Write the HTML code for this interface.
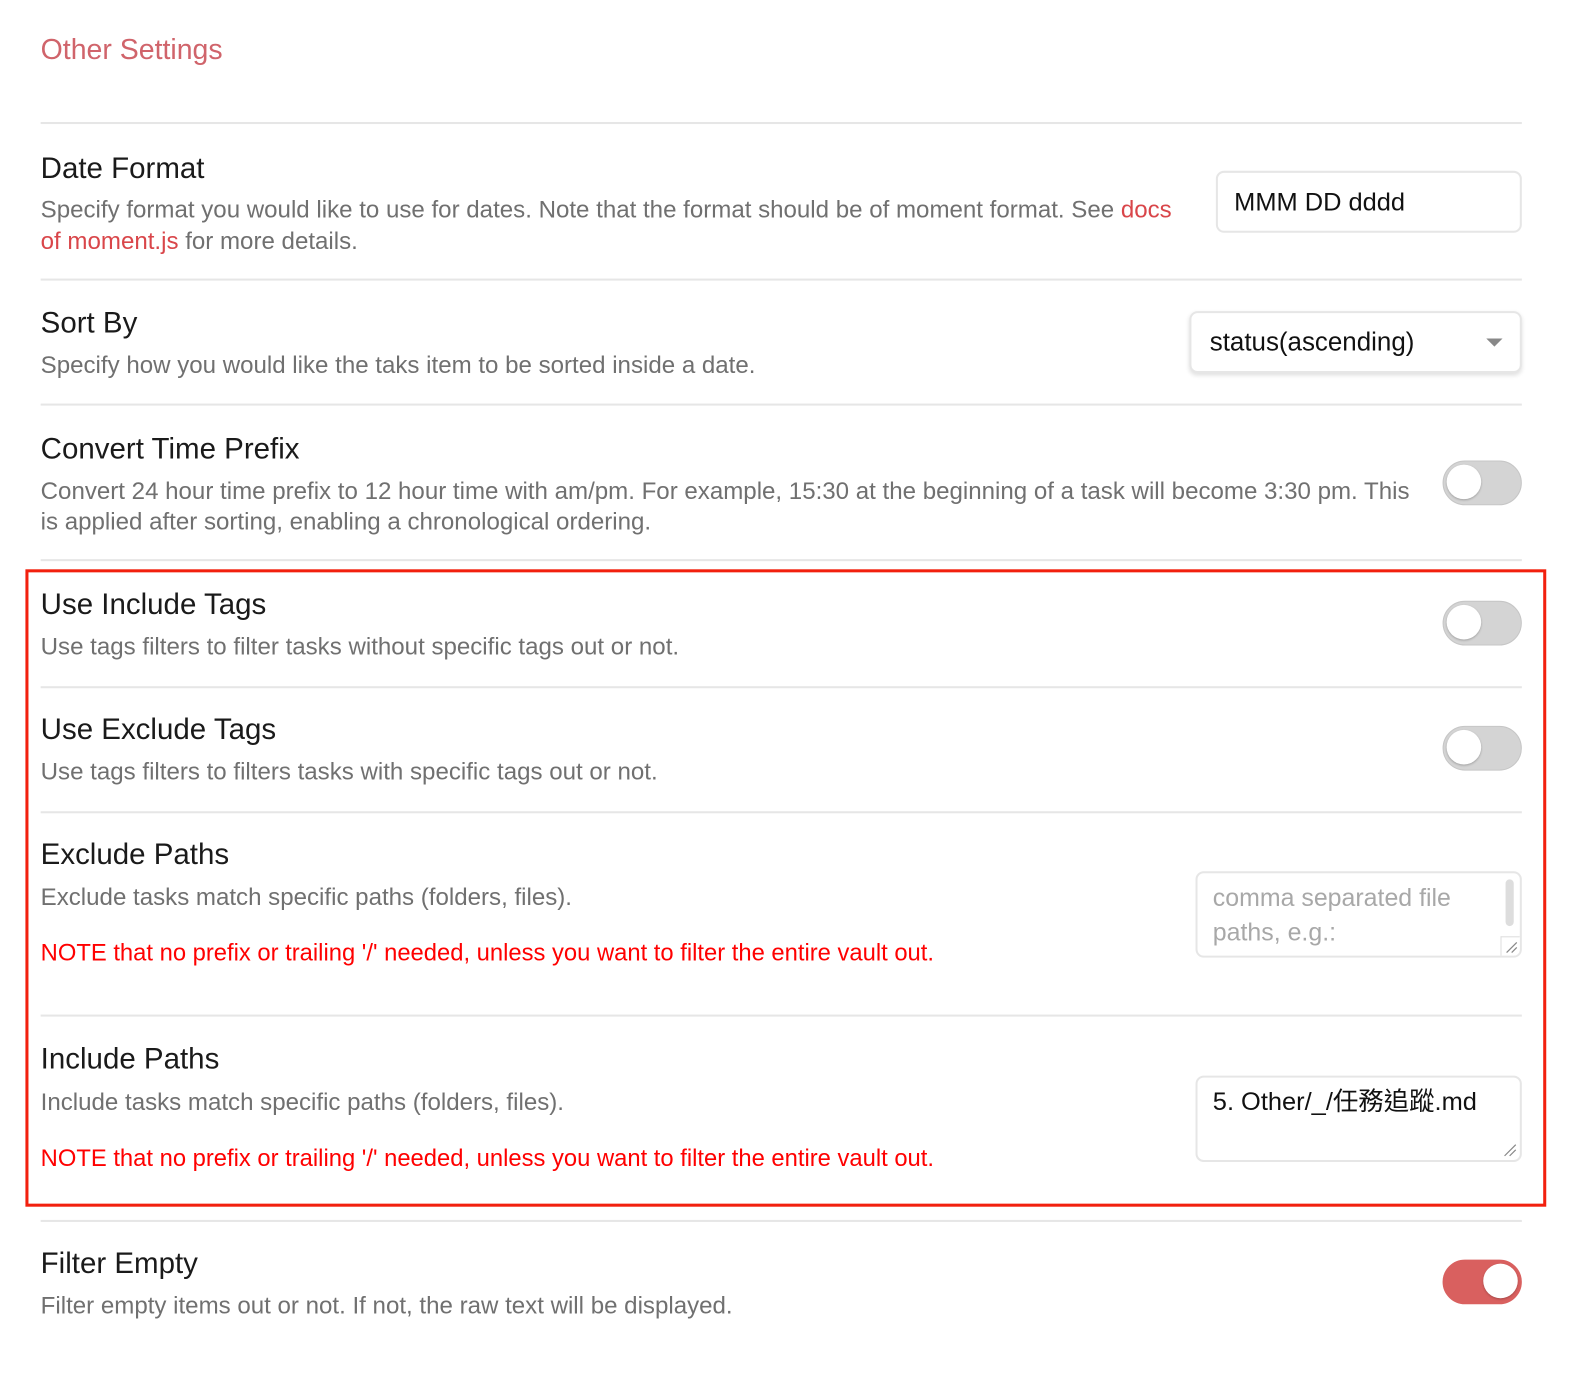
<!DOCTYPE html>
<html><head><meta charset="utf-8"><style>
html,body{margin:0;padding:0;background:#fff;width:1594px;height:1384px;overflow:hidden}
#w{position:absolute;left:0;top:0;width:1568px;height:1362px;transform:scale(1.0166);transform-origin:0 0;font-family:"Liberation Sans","Noto Sans CJK TC",sans-serif}
.t{position:absolute;white-space:nowrap;line-height:1;margin-top:1.5px}
.h{font-size:29px;color:#1a1a1a}
.d{font-size:23.7px;color:#707070}
.n{font-size:23.4px;color:#f00}
.a{color:#d9464a}
.hr{position:absolute;left:40px;width:1457px;height:2px;background:#e6e6e6}
.tg{position:absolute;left:1419px;width:76px;height:42px;border-radius:22px;background:#d4d4d4;border:1px solid #c6c6c6}
.tg::after{content:"";position:absolute;left:3px;top:3px;width:34px;height:34px;border-radius:50%;background:#fff;box-shadow:0 1px 2px rgba(0,0,0,.25)}
.tg.on{background:#d9605f;border-color:#d9605f}
.tg.on::after{left:39px}
.box{position:absolute;border:2px solid #e6e6e6;border-radius:8px;background:#fff}
</style></head><body><div id="w">
<div class="t" style="left:40px;top:33px;font-size:28px;color:#d0646b">Other Settings</div>
<div class="hr" style="top:120px"></div>

<div class="t h" style="left:40px;top:150px">Date Format</div>
<div class="t d" style="left:40px;top:194px">Specify format you would like to use for dates. Note that the format should be of moment format. See <span class="a">docs</span></div>
<div class="t d" style="left:40px;top:225px"><span class="a">of moment.js</span> for more details.</div>
<div class="box" style="left:1196px;top:168px;width:297px;height:57px"></div>
<div class="t" style="left:1214px;top:185px;font-size:25px;color:#111">MMM DD dddd</div>
<div class="hr" style="top:274px"></div>

<div class="t h" style="left:40px;top:302px">Sort By</div>
<div class="t d" style="left:40px;top:347px">Specify how you would like the taks item to be sorted inside a date.</div>
<div class="box" style="left:1170px;top:306px;width:323px;height:57px;box-shadow:0 2px 4px rgba(0,0,0,.12)"></div>
<div class="t" style="left:1190px;top:323px;font-size:25.5px;color:#111">status(ascending)</div>
<div style="position:absolute;left:1462px;top:333px;width:0;height:0;border-left:8px solid transparent;border-right:8px solid transparent;border-top:8px solid #888"></div>
<div class="hr" style="top:397px"></div>

<div class="t h" style="left:40px;top:426px">Convert Time Prefix</div>
<div class="t d" style="left:40px;top:471px">Convert 24 hour time prefix to 12 hour time with am/pm. For example, 15:30 at the beginning of a task will become 3:30 pm. This</div>
<div class="t d" style="left:40px;top:501px">is applied after sorting, enabling a chronological ordering.</div>
<div class="tg" style="top:453px"></div>
<div class="hr" style="top:550px"></div>

<div style="position:absolute;left:25px;top:560px;width:1490px;height:621px;border:3px solid #f2200e"></div>

<div class="t h" style="left:40px;top:579px">Use Include Tags</div>
<div class="t d" style="left:40px;top:624px">Use tags filters to filter tasks without specific tags out or not.</div>
<div class="tg" style="top:591px"></div>
<div class="hr" style="top:675px"></div>

<div class="t h" style="left:40px;top:702px">Use Exclude Tags</div>
<div class="t d" style="left:40px;top:747px">Use tags filters to filters tasks with specific tags out or not.</div>
<div class="tg" style="top:714px"></div>
<div class="hr" style="top:798px"></div>

<div class="t h" style="left:40px;top:825px">Exclude Paths</div>
<div class="t d" style="left:40px;top:870px">Exclude tasks match specific paths (folders, files).</div>
<div class="t n" style="left:40px;top:924px">NOTE that no prefix or trailing '/' needed, unless you want to filter the entire vault out.</div>
<div class="box" style="left:1176px;top:857px;width:317px;height:81px;overflow:hidden">
<div class="t" style="left:15px;top:6px;font-size:24.5px;color:#a8a8a8;line-height:34px;white-space:normal;width:275px">comma separated file paths, e.g.: path1,path2/,path3</div>
<div style="position:absolute;right:6px;top:6px;width:8px;height:46px;border-radius:4px;background:#ddd"></div>
<div style="position:absolute;right:0;bottom:0;width:18px;height:18px;background:#fff;border-left:1px solid #ddd;border-top:1px solid #ddd"></div>
<svg style="position:absolute;right:2px;bottom:2px" width="12" height="12"><path d="M1 11L11 1M6 11L11 6" stroke="#888" stroke-width="1.2"/></svg>
</div>
<div class="hr" style="top:998px"></div>

<div class="t h" style="left:40px;top:1026px">Include Paths</div>
<div class="t d" style="left:40px;top:1072px">Include tasks match specific paths (folders, files).</div>
<div class="t n" style="left:40px;top:1126px">NOTE that no prefix or trailing '/' needed, unless you want to filter the entire vault out.</div>
<div class="box" style="left:1176px;top:1058px;width:317px;height:81px"></div>
<div class="t" style="left:1193px;top:1070px;font-size:25px;color:#111">5. Other/_/任務追蹤.md</div>
<svg style="position:absolute;left:1478px;top:1124px" width="14" height="14"><path d="M2 13L13 2M7 13L13 7" stroke="#888" stroke-width="1.2"/></svg>

<div class="hr" style="top:1200px"></div>
<div class="t h" style="left:40px;top:1227px">Filter Empty</div>
<div class="t d" style="left:40px;top:1272px">Filter empty items out or not. If not, the raw text will be displayed.</div>
<div class="tg on" style="top:1239px"></div>
</div></body></html>
